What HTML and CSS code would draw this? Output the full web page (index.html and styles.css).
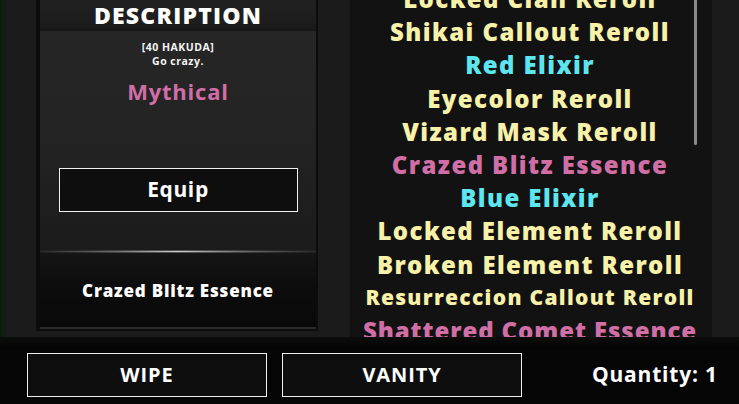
FILE: index.html
```html
<!DOCTYPE html>
<html>
<head>
<meta charset="utf-8">
<link rel="stylesheet" href="styles.css">
</head>
<body>
<div class="screen">
  <div class="top">
    <div class="edge"></div>
    <div class="panel">
      <div class="panel-inner">
        <div class="desc-head">DESCRIPTION</div>
        <div class="desc-body">
          <div class="desc-text">[40 HAKUDA]<br>Go crazy.</div>
          <div class="rarity">Mythical</div>
          <div class="equip">Equip</div>
        </div>
        <div class="shine"></div>
        <div class="desc-foot">Crazed Blitz Essence</div>
      </div>
    </div>
    <div class="list">
      <div class="list-items">
        <div class="item y">Locked Clan Reroll</div>
        <div class="item y">Shikai Callout Reroll</div>
        <div class="item c">Red Elixir</div>
        <div class="item y">Eyecolor Reroll</div>
        <div class="item y">Vizard Mask Reroll</div>
        <div class="item p">Crazed Blitz Essence</div>
        <div class="item c">Blue Elixir</div>
        <div class="item y">Locked Element Reroll</div>
        <div class="item y">Broken Element Reroll</div>
        <div class="item y small">Resurreccion Callout Reroll</div>
        <div class="item p">Shattered Comet Essence</div>
      </div>
      <div class="scrollbar"></div>
    </div>
  </div>
  <div class="bar">
    <div class="btn">WIPE</div>
    <div class="btn">VANITY</div>
    <div class="qty">Quantity: 1</div>
  </div>
</div>
</body>
</html>
```
FILE: styles.css
```css
* { box-sizing: border-box; }
html, body { margin: 0; padding: 0; background: #1c1b1b; }
body { font-family: "Open Sans", "DejaVu Sans", sans-serif; font-weight: 800; color: #fff; }
.screen { width: 739px; height: 404px; overflow: hidden; display: flex; flex-direction: column; background: #1c1b1b; }
.top { height: 337px; display: flex; }
.edge { width: 6px; background: linear-gradient(90deg, #0c1a0c, #0f200f 60%, #161916); }
.panel { margin-left: 30px; width: 282px; height: 331px; background: #0c0c0c; padding: 0 2px 2px 4px; }
.panel-inner { height: 100%; display: flex; flex-direction: column; background: #1a1a1a; }
.desc-head { height: 31px; background: linear-gradient(#202020, #1d1d1d 75%, #161616); text-align: center; font-size: 23px; line-height: 30px; letter-spacing: 1.2px; }
.desc-body { height: 219px; background: linear-gradient(#262626, #232323 50%, #1b1b1b); display: flex; flex-direction: column; align-items: center; }
.desc-text { margin-top: 10px; font-size: 10.5px; line-height: 13.5px; text-align: center; font-weight: 700; color: #f4f4f4; letter-spacing: 0.5px; }
.rarity { margin-top: 8px; font-size: 22px; line-height: 30px; color: #d06ea6; font-weight: 700; letter-spacing: 0.8px; }
.equip { margin-top: 62px; width: 239px; height: 44px; border: 1px solid #f0f0f0; background: #0e0e0e; font-size: 21px; line-height: 41px; text-align: center; font-weight: 700; letter-spacing: 0.6px; }
.shine { height: 3px; background: radial-gradient(ellipse at center, #d0d0d0 0%, #707070 30%, #2a2a2a 70%, #141414 100%); }
.desc-foot { flex: 1; background: linear-gradient(#151515, #0c0c0c 50%, #080808); text-align: center; font-size: 17px; line-height: 20px; padding-top: 28px; border-bottom: 2px solid #2a2a2a; letter-spacing: 0.8px; }
.list { margin-left: 32px; width: 362px; height: 337px; background: #121212; overflow: hidden; position: relative; }
.list-items { margin-top: -18px; margin-right: 2px; }
.item { height: 33.2px; line-height: 33.2px; text-align: center; font-size: 24px; white-space: nowrap; letter-spacing: 1.4px; }
.item.small { font-size: 21px; letter-spacing: 1.3px; }
.item.p:last-child { letter-spacing: 0.9px; }
.y { color: #f7f1a9; }
.c { color: #5ee6f0; }
.p { color: #d06ea6; }
.scrollbar { position: absolute; left: 344px; top: 0; width: 3px; height: 145px; background: #8a8a8a; border-radius: 0 0 2px 2px; }
.bar { flex: 1; background: linear-gradient(#0b0d0b, #050505 15%, #050505); display: flex; align-items: flex-start; padding: 16px 0 0 27px; }
.btn { width: 240px; height: 44px; border: 1px solid #f0f0f0; background: #0e0e0e; font-size: 20px; line-height: 42px; text-align: center; margin-right: 15px; font-weight: 700; letter-spacing: 0.9px; }
.qty { margin-left: 55px; font-size: 21px; line-height: 42px; font-weight: 700; letter-spacing: 0.8px; }
```
